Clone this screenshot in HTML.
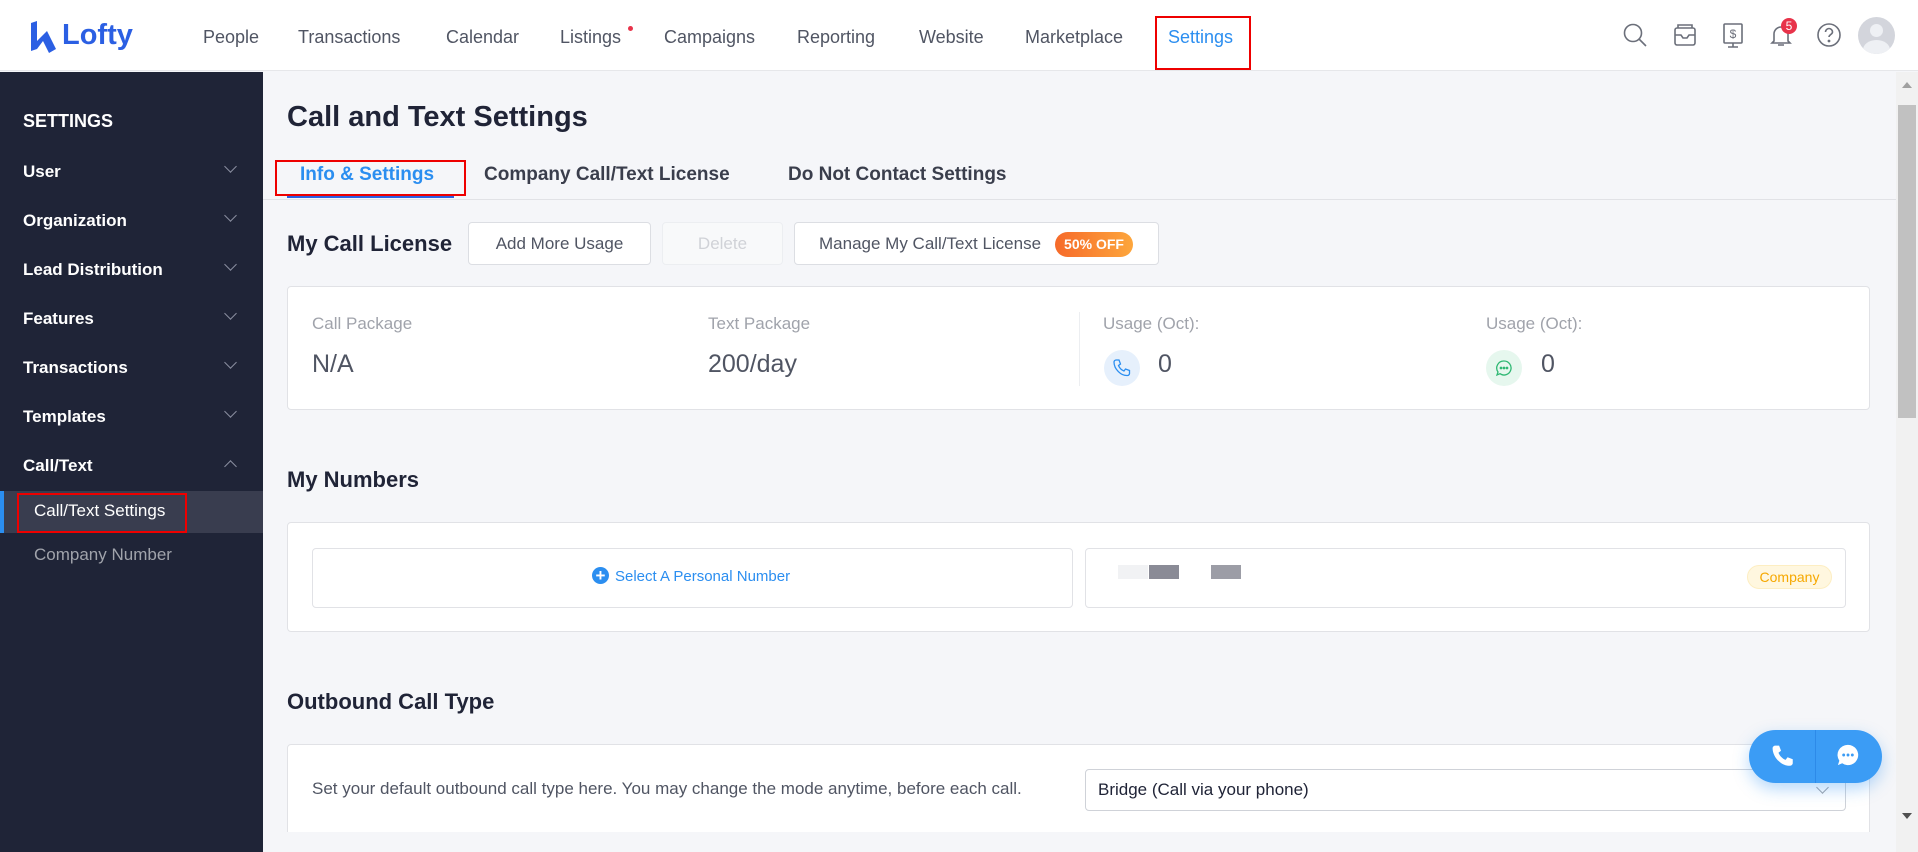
<!DOCTYPE html>
<html><head><meta charset="utf-8"><style>
*{box-sizing:border-box;margin:0;padding:0}
body{width:1918px;height:852px;overflow:hidden;font-family:"Liberation Sans",sans-serif;background:#f5f6f9;position:relative;color:#202437}
.abs{position:absolute}
.hdr{left:0;top:0;width:1918px;height:71px;background:#fff;border-bottom:1px solid #e6e7ea}
.nav{top:27px;font-size:18px;color:#505563;white-space:nowrap}
.side{left:0;top:72px;width:263px;height:780px;background:#1f2437}
.si{left:23px;font-size:17px;font-weight:bold;color:#fff}
.chev{left:226px;width:9px;height:9px;border-right:1.3px solid #8a8fa0;border-bottom:1.3px solid #8a8fa0;transform:rotate(45deg)}
.card{background:#fff;border:1px solid #e1e2e6;border-radius:4px}
.btn{background:#fff;border:1px solid #dcdee3;border-radius:4px;font-size:17px;color:#505563;text-align:center;line-height:41px;height:43px;top:222px}
.lbl{top:314px;font-size:17px;color:#a0a3ab}
.val{top:350px;font-size:25px;color:#505563}
.h2{font-size:22px;font-weight:bold;color:#202437}
.ico{top:22px;width:26px;height:26px}
</style></head><body>
<div class="abs hdr"></div>
<svg class="abs" style="left:29px;top:21px" width="28" height="33" viewBox="0 0 28 33"><path d="M2 2 L8 0 L8 20 L18 10 L27 28 L20 32 L14 20 L8 28 L2 30 Z" fill="#2b5fe3"/></svg>
<div class="abs" style="left:62px;top:19px;font-size:29px;font-weight:bold;color:#2b5fe3">Lofty</div>
<div class="abs nav" style="left:203px">People</div>
<div class="abs nav" style="left:298px">Transactions</div>
<div class="abs nav" style="left:446px">Calendar</div>
<div class="abs nav" style="left:560px">Listings</div>
<div class="abs" style="left:628px;top:26px;width:5px;height:5px;border-radius:50%;background:#e8334a"></div>
<div class="abs nav" style="left:664px">Campaigns</div>
<div class="abs nav" style="left:797px">Reporting</div>
<div class="abs nav" style="left:919px">Website</div>
<div class="abs nav" style="left:1025px">Marketplace</div>
<div class="abs nav" style="left:1168px;color:#2b8ef0">Settings</div>
<div class="abs" style="left:1155px;top:16px;width:96px;height:54px;border:2px solid #e00"></div>
<svg class="abs ico" style="left:1622px" viewBox="0 0 26 26" fill="none" stroke="#6b6f7a" stroke-width="1.6"><circle cx="11" cy="11" r="8.5"/><path d="M17 17l7 7"/></svg>
<svg class="abs ico" style="left:1672px" viewBox="0 0 26 26" fill="none" stroke="#6b6f7a" stroke-width="1.6"><rect x="3" y="6" width="20" height="17" rx="2"/><path d="M6 6V3h14v3M3 13h6l2 3h4l2-3h6"/></svg>
<svg class="abs ico" style="left:1720px" viewBox="0 0 26 26" fill="none" stroke="#6b6f7a" stroke-width="1.6"><rect x="4" y="2" width="18" height="19" rx="1"/><path d="M13 21v4M8 25h10"/><text x="13" y="16" font-size="12" text-anchor="middle" fill="#6b6f7a" stroke="none" font-family="Liberation Sans">$</text></svg>
<svg class="abs ico" style="left:1768px" viewBox="0 0 26 26" fill="none" stroke="#6b6f7a" stroke-width="1.6"><path d="M6 19V12a7 7 0 0114 0v7l2 2H4z M10 23h6"/></svg>
<div class="abs" style="left:1781px;top:18px;width:16px;height:16px;border-radius:8px;background:#e8334a;color:#fff;font-size:12px;text-align:center;line-height:16px">5</div>
<svg class="abs ico" style="left:1816px" viewBox="0 0 26 26" fill="none" stroke="#6b6f7a" stroke-width="1.6"><circle cx="13" cy="13" r="11"/><path d="M9.5 10a3.5 3.5 0 117 0c0 2.5-3.5 2.5-3.5 5"/><circle cx="13" cy="19" r=".6" fill="#6b6f7a"/></svg>
<div class="abs" style="left:1858px;top:17px;width:37px;height:37px;border-radius:50%;background:#d3d5dc;overflow:hidden"><div class="abs" style="left:12px;top:7px;width:13px;height:13px;border-radius:50%;background:#eef0f4"></div><div class="abs" style="left:5px;top:23px;width:27px;height:20px;border-radius:50%;background:#eef0f4"></div></div>

<div class="abs side"></div>
<div class="abs" style="left:23px;top:111px;font-size:18px;font-weight:bold;color:#fff">SETTINGS</div>
<div class="abs si" style="top:162px">User</div><div class="abs chev" style="top:162px"></div>
<div class="abs si" style="top:211px">Organization</div><div class="abs chev" style="top:211px"></div>
<div class="abs si" style="top:260px">Lead Distribution</div><div class="abs chev" style="top:260px"></div>
<div class="abs si" style="top:309px">Features</div><div class="abs chev" style="top:309px"></div>
<div class="abs si" style="top:358px">Transactions</div><div class="abs chev" style="top:358px"></div>
<div class="abs si" style="top:407px">Templates</div><div class="abs chev" style="top:407px"></div>
<div class="abs si" style="top:456px">Call/Text</div><div class="abs chev" style="top:462px;transform:rotate(225deg)"></div>
<div class="abs" style="left:0;top:491px;width:263px;height:42px;background:#393d4f;border-left:4px solid #2b8ef0"></div>
<div class="abs" style="left:34px;top:501px;font-size:17px;color:#fff">Call/Text Settings</div>
<div class="abs" style="left:17px;top:493px;width:170px;height:40px;border:2px solid #e00"></div>
<div class="abs" style="left:34px;top:545px;font-size:17px;color:#a0a3ab">Company Number</div>

<div class="abs" style="left:287px;top:101px;font-size:29px;font-weight:bold">Call and Text Settings</div>
<div class="abs" style="left:263px;top:199px;width:1633px;height:1px;background:#e1e2e6"></div>
<div class="abs" style="left:300px;top:164px;font-size:19px;font-weight:bold;color:#2b8ef0">Info &amp; Settings</div>
<div class="abs" style="left:287px;top:195px;width:167px;height:3px;background:#2b5fe3"></div>
<div class="abs" style="left:275px;top:160px;width:191px;height:36px;border:2px solid #e00"></div>
<div class="abs" style="left:484px;top:164px;font-size:19px;font-weight:bold;color:#3a3e4c">Company Call/Text License</div>
<div class="abs" style="left:788px;top:164px;font-size:19px;font-weight:bold;color:#3a3e4c">Do Not Contact Settings</div>

<div class="abs h2" style="left:287px;top:231px">My Call License</div>
<div class="abs btn" style="left:468px;width:183px">Add More Usage</div>
<div class="abs btn" style="left:662px;width:121px;background:#f8f9fa;border-color:#eceef1;color:#d0d2d7">Delete</div>
<div class="abs btn" style="left:794px;width:365px;text-align:left;padding-left:24px">Manage My Call/Text License</div>
<div class="abs" style="left:1055px;top:232px;width:78px;height:25px;border-radius:13px;background:linear-gradient(90deg,#f66a2a,#fda63c);color:#fff;font-size:14px;font-weight:bold;text-align:center;line-height:25px">50% OFF</div>

<div class="abs card" style="left:287px;top:286px;width:1583px;height:124px"></div>
<div class="abs lbl" style="left:312px">Call Package</div>
<div class="abs lbl" style="left:708px">Text Package</div>
<div class="abs lbl" style="left:1103px">Usage (Oct):</div>
<div class="abs lbl" style="left:1486px">Usage (Oct):</div>
<div class="abs val" style="left:312px">N/A</div>
<div class="abs val" style="left:708px">200/day</div>
<div class="abs" style="left:1079px;top:312px;width:1px;height:74px;background:#eceef1"></div>
<div class="abs" style="left:1104px;top:350px;width:36px;height:36px;border-radius:50%;background:#e6f0fc"></div>
<svg class="abs" style="left:1112px;top:358px" width="20" height="20" viewBox="0 0 20 20" fill="none" stroke="#2b8ef0" stroke-width="1.3"><path d="M4 2l3 0 1.5 4-2 1.5c1 2.5 3 4.5 5.5 5.5l1.5-2 4 1.5v3c0 1-1 2-2 2C9 18 2 11 2 4c0-1 1-2 2-2z"/></svg>
<div class="abs val" style="left:1158px">0</div>
<div class="abs" style="left:1486px;top:350px;width:36px;height:36px;border-radius:50%;background:#e6f7ee"></div>
<svg class="abs" style="left:1495px;top:359px" width="18" height="18" viewBox="0 0 18 18" fill="none" stroke="#2fb873" stroke-width="1.3"><path d="M9 2a7 7 0 11-4 12.7L2 16l1-3A7 7 0 019 2z"/><circle cx="6" cy="9" r=".7" fill="#2fb873"/><circle cx="9" cy="9" r=".7" fill="#2fb873"/><circle cx="12" cy="9" r=".7" fill="#2fb873"/></svg>
<div class="abs val" style="left:1541px">0</div>

<div class="abs h2" style="left:287px;top:467px">My Numbers</div>
<div class="abs card" style="left:287px;top:522px;width:1583px;height:110px"></div>
<div class="abs card" style="left:312px;top:548px;width:761px;height:60px"></div>
<div class="abs" style="left:592px;top:567px;width:17px;height:17px;border-radius:50%;background:#2b8ef0;color:#fff;font-size:17px;font-weight:bold;line-height:17px;text-align:center">+</div>
<div class="abs" style="left:615px;top:568px;font-size:15px;color:#2b8ef0">Select A Personal Number</div>
<div class="abs card" style="left:1085px;top:548px;width:761px;height:60px"></div>
<div class="abs" style="left:1118px;top:565px;width:30px;height:14px;background:#f1f2f4"></div>
<div class="abs" style="left:1149px;top:565px;width:30px;height:14px;background:#8a8b96"></div>
<div class="abs" style="left:1211px;top:565px;width:30px;height:14px;background:#9c9da6"></div>
<div class="abs" style="left:1747px;top:565px;width:85px;height:24px;border-radius:12px;background:#fff7df;border:1px solid #fdeec2;color:#f6a800;font-size:14px;text-align:center;line-height:22px">Company</div>

<div class="abs h2" style="left:287px;top:689px">Outbound Call Type</div>
<div class="abs card" style="left:287px;top:744px;width:1583px;height:100px;border-radius:4px 4px 0 0"></div>
<div class="abs" style="left:287px;top:832px;width:1609px;height:20px;background:#f5f6f9"></div>
<div class="abs" style="left:312px;top:779px;font-size:17px;color:#505563">Set your default outbound call type here. You may change the mode anytime, before each call.</div>
<div class="abs" style="left:1085px;top:769px;width:761px;height:42px;border:1px solid #cfd2d8;border-radius:4px;background:#fff"></div>
<div class="abs" style="left:1098px;top:780px;font-size:17px;color:#202437">Bridge (Call via your phone)</div>
<div class="abs" style="left:1818px;top:783px;width:9px;height:9px;border-right:1.3px solid #a0a3ab;border-bottom:1.3px solid #a0a3ab;transform:rotate(45deg)"></div>

<div class="abs" style="left:1749px;top:730px;width:133px;height:53px;border-radius:27px;background:#3b9cf5;box-shadow:0 6px 16px rgba(43,142,240,.35)"></div>
<div class="abs" style="left:1815px;top:730px;width:1px;height:53px;background:#2d8ae8"></div>
<svg class="abs" style="left:1770px;top:743px" width="26" height="26" viewBox="0 0 20 20"><path d="M4 2l3 0 1.5 4-2 1.5c1 2.5 3 4.5 5.5 5.5l1.5-2 4 1.5v3c0 1-1 2-2 2C9 18 2 11 2 4c0-1 1-2 2-2z" fill="#fff"/></svg>
<svg class="abs" style="left:1835px;top:742px" width="26" height="26" viewBox="0 0 18 18"><path d="M9 2a7 7 0 11-4 12.7L2 16l1-3A7 7 0 019 2z" fill="#fff"/><circle cx="6" cy="9" r="1" fill="#3b9cf5"/><circle cx="9" cy="9" r="1" fill="#3b9cf5"/><circle cx="12" cy="9" r="1" fill="#3b9cf5"/></svg>

<div class="abs" style="left:1896px;top:72px;width:22px;height:780px;background:#f1f1f1"></div>
<div class="abs" style="left:1898px;top:105px;width:18px;height:313px;background:#c1c1c1"></div>
<div class="abs" style="left:1902px;top:82px;width:0;height:0;border-left:5px solid transparent;border-right:5px solid transparent;border-bottom:6px solid #a0a0a0"></div>
<div class="abs" style="left:1902px;top:813px;width:0;height:0;border-left:5px solid transparent;border-right:5px solid transparent;border-top:6px solid #505050"></div>
</body></html>
